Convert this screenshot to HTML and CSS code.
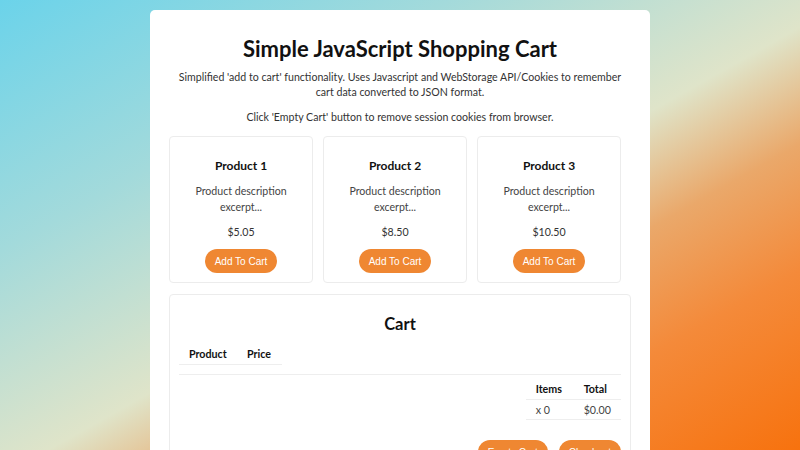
FILE: index.html
```html
<!DOCTYPE html>
<html lang="en">
<head>
<meta charset="utf-8">
<title>Simple JavaScript Shopping Cart</title>
<link rel="stylesheet" href="styles.css">
</head>
<body>
<main class="page">
  <h1 class="title">Simple JavaScript Shopping Cart</h1>
  <p class="intro">Simplified 'add to cart' functionality. Uses Javascript and WebStorage API/Cookies to remember cart data converted to JSON format.</p>
  <p class="note">Click 'Empty Cart' button to remove session cookies from browser.</p>

  <section class="products">
    <div class="card">
      <h3 class="card-title">Product 1</h3>
      <p class="card-desc">Product description excerpt...</p>
      <p class="card-price">$5.05</p>
      <button class="btn">Add To Cart</button>
    </div>
    <div class="card">
      <h3 class="card-title">Product 2</h3>
      <p class="card-desc">Product description excerpt...</p>
      <p class="card-price">$8.50</p>
      <button class="btn">Add To Cart</button>
    </div>
    <div class="card">
      <h3 class="card-title">Product 3</h3>
      <p class="card-desc">Product description excerpt...</p>
      <p class="card-price">$10.50</p>
      <button class="btn">Add To Cart</button>
    </div>
  </section>

  <section class="cart">
    <h2 class="cart-title">Cart</h2>
    <table class="cart-table">
      <thead><tr><th class="col-a">Product</th><th class="col-b">Price</th></tr></thead>
    </table>
    <hr class="divider">
    <div class="totals-wrap">
      <table class="totals">
        <thead><tr><th class="col-c">Items</th><th class="col-b">Total</th></tr></thead>
        <tbody><tr><td>x 0</td><td>$0.00</td></tr></tbody>
      </table>
    </div>
    <div class="actions">
      <button class="btn btn-lg">Empty Cart</button>
      <button class="btn btn-lg">Checkout</button>
    </div>
  </section>
</main>
</body>
</html>
```

FILE: styles.css
```css
html {
  height: 100%;
}
html, body {
  margin: 0;
  padding: 0;
}
body {
  height: 100%;
  background: linear-gradient(to bottom right, #6bd3ea 0%, #a3dadb 28%, #dfe4c9 53%, #eaa86a 66%, #f48a3a 80%, #f7720e 100%);
  background-repeat: no-repeat;
  font-family: "Lato", "Noto Sans", sans-serif;
  color: #333;
  overflow: hidden;
}
.page {
  box-sizing: border-box;
  width: 500px;
  margin: 10px auto 0;
  background: #fff;
  border-radius: 5px;
  padding: 26px 19px 40px;
  text-align: center;
  min-height: 500px;
}
.title {
  margin: 0;
  font-size: 22px;
  line-height: 26px;
  font-weight: 700;
  color: #111;
}
.intro {
  margin: 8px 0 0;
  padding: 0 8px;
  font-size: 10.6px;
  line-height: 15px;
}
.note {
  margin: 10px 0 0;
  font-size: 10.6px;
  line-height: 15px;
}
.products {
  margin-top: 11px;
  display: flex;
  gap: 10px;
}
.card {
  box-sizing: border-box;
  width: 144px;
  height: 147px;
  border: 1px solid #ececec;
  border-radius: 4px;
  padding: 20px 8px 0;
  display: flex;
  flex-direction: column;
  align-items: center;
}
.card-title {
  margin: 0;
  font-size: 12px;
  line-height: 18px;
  font-weight: 700;
  color: #111;
}
.card-desc {
  margin: 8px 0 0;
  width: 100px;
  font-size: 10.6px;
  line-height: 16px;
  color: #444;
}
.card-price {
  margin: 9px 0 0;
  font-size: 10.6px;
  line-height: 16px;
  color: #333;
}
.btn {
  margin-top: 9px;
  height: 24px;
  padding: 0 10px;
  border: none;
  border-radius: 12px;
  background: #ef8732;
  color: #fff;
  font-family: "Liberation Sans", Arial, sans-serif;
  font-size: 10px;
}
.cart {
  box-sizing: border-box;
  margin-top: 11px;
  border: 1px solid #ececec;
  border-radius: 4px;
  padding: 19px 9px 20px;
}
.cart-title {
  margin: 0;
  font-size: 16.5px;
  line-height: 20px;
  font-weight: 700;
  color: #111;
}
.cart-table, .totals {
  border-collapse: collapse;
  table-layout: fixed;
  font-size: 10.7px;
}
.cart-table {
  margin-top: 10px;
}
.cart-table th, .totals th, .totals td {
  box-sizing: border-box;
  padding: 0 10px;
  height: 20px;
  line-height: 16px;
  text-align: left;
  border-bottom: 1px solid #eee;
  color: #111;
}
.col-a { width: 58px; }
.col-b { width: 45px; }
.col-c { width: 48px; }
.divider {
  margin: 9px 0 0;
  border: 0;
  border-top: 1px solid #eee;
}
.totals-wrap {
  display: flex;
  justify-content: flex-end;
  margin-top: 5px;
}
.totals td {
  font-weight: 400;
  color: #444;
}
.actions {
  margin-top: 20px;
  display: flex;
  justify-content: flex-end;
  gap: 11px;
}
.btn-lg {
  margin-top: 0;
  padding: 0 10px;
}
```
